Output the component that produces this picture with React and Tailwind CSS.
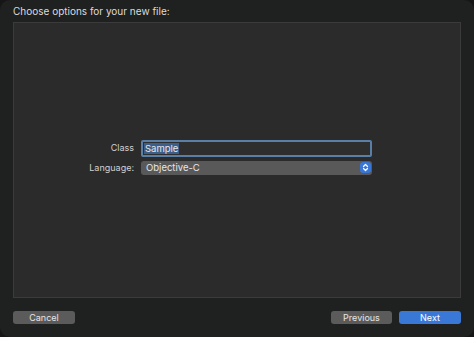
export default function App() {
  return (
    <div className="w-[474px] h-[337px] bg-[#161616] overflow-hidden" style={{ fontFamily: 'Inter, "Liberation Sans", sans-serif' }}>
      <div className="w-full h-full bg-[#1f2020] rounded-[10px] flex flex-col px-[13px]">
        {/* Header */}
        <div className="h-[22px] pt-[5px] text-[10px] leading-[12px] text-[#dcdcdc]">Choose options for your new file:</div>

        {/* Options panel */}
        <div className="h-[276px] bg-[#2b2b2b] border border-[#3b3b3b] flex flex-col justify-center items-center pb-[6px]">
          <div className="flex flex-col gap-[4px] w-full">
            <div className="flex items-center">
              <div className="w-[123px] text-right pr-[3px] text-[9px] text-[#d0d0d0]">Class</div>
              <div className="ml-[4px] w-[231px] h-[17px] border-[2px] border-[#5a7ea6] rounded-[2px] bg-[#2e2e2e] flex items-center px-[1px]">
                <span className="bg-[#3c5e8a] text-[#e8e8e8] text-[9.5px] leading-[11px] px-[1px]">Sample</span>
              </div>
            </div>
            <div className="flex items-center">
              <div className="w-[123px] text-right pr-[3px] text-[9px] text-[#d0d0d0]">Language:</div>
              <div className="ml-[4px] w-[231px] h-[14px] rounded-[3px] bg-[#595959] flex items-center justify-between pl-[5px] pr-[1px]">
                <span className="text-[9.5px] leading-[12px] text-[#e6e6e6]">Objective-C</span>
                <div className="w-[11px] h-[11px] rounded-[3px] bg-[#3a76d6] flex items-center justify-center">
                  <svg width="7" height="9" viewBox="0 0 7 9" fill="none" stroke="white" strokeWidth="1.2" strokeLinecap="round" strokeLinejoin="round">
                    <path d="M1.5 3.5L3.5 1.5L5.5 3.5" />
                    <path d="M1.5 5.5L3.5 7.5L5.5 5.5" />
                  </svg>
                </div>
              </div>
            </div>
          </div>
        </div>

        {/* Footer buttons */}
        <div className="flex items-center justify-between mt-[13px]">
          <button className="w-[62px] h-[13px] rounded-[3px] bg-[#5b5b5b] text-[9px] leading-[13px] text-[#e6e6e6]">Cancel</button>
          <div className="flex gap-[7px]">
            <button className="w-[61px] h-[13px] rounded-[3px] bg-[#5b5b5b] text-[9px] leading-[13px] text-[#e6e6e6]">Previous</button>
            <button className="w-[62px] h-[13px] rounded-[3px] bg-[#3a78d8] text-[9px] leading-[13px] text-white">Next</button>
          </div>
        </div>
      </div>
    </div>
  )
}
